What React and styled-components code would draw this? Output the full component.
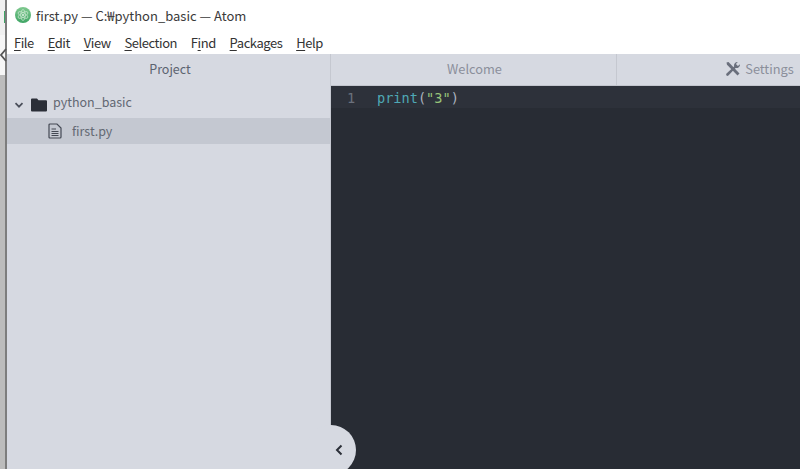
import React from "react";
import styled, { createGlobalStyle } from "styled-components";

const GlobalStyle = createGlobalStyle`
  html, body, #root {
    margin: 0;
    padding: 0;
    width: 800px;
    height: 469px;
    overflow: hidden;
    background: #fff;
  }
`;

const Page = styled.div`
  position: relative;
  display: flex;
  width: 800px;
  height: 469px;
  overflow: hidden;
  font-family: "Noto Sans CJK KR", "Noto Sans", sans-serif;
`;

const BehindStrip = styled.div`
  flex: 0 0 7px;
  box-sizing: border-box;
  display: flex;
  flex-direction: column;
  border-right: 2px solid #7d7d7d;
`;

const StripPart = styled.div`
  height: ${(p) => (p.$height ? `${p.$height}px` : "auto")};
  flex: ${(p) => (p.$height ? "none" : 1)};
  background: ${(p) => p.$color};
`;

const StripGreen = styled.div`
  position: absolute;
  left: 4px;
  top: 11px;
  width: 1px;
  height: 12px;
  background: #3fa565;
`;

const StripArrow = styled.svg`
  position: absolute;
  left: 0;
  top: 47px;
`;

const Window = styled.div`
  flex: 1;
  min-width: 0;
  display: flex;
  flex-direction: column;
`;

const TitleBar = styled.div`
  height: 32px;
  display: flex;
  align-items: center;
  gap: 5px;
  padding-left: 8px;
  padding-bottom: 2px;
  box-sizing: border-box;
  font-size: 13px;
  color: #3a3a3a;
  background: #fff;
`;

const MenuBar = styled.div`
  height: 22px;
  display: flex;
  align-items: center;
  padding-left: 7px;
  padding-bottom: 2px;
  box-sizing: border-box;
  gap: 13.8px;
  font-size: 13px;
  letter-spacing: -0.45px;
  color: #333;
  background: #fff;
`;

const MenuItem = styled.span`
  u {
    text-underline-offset: 2px;
  }
`;

const Workspace = styled.div`
  flex: 1;
  min-height: 0;
  display: flex;
`;

const Sidebar = styled.div`
  flex: 0 0 324px;
  background: #d6d9e1;
  border-right: 1px solid #c5c8d0;
  box-sizing: border-box;
  display: flex;
  flex-direction: column;
`;

const PanelTitle = styled.div`
  height: 32px;
  display: flex;
  align-items: center;
  justify-content: center;
  font-size: 12.5px;
  color: #5c6370;
  padding-left: 3px;
  padding-bottom: 4px;
  box-sizing: border-box;
`;

const TreeList = styled.div`
  padding-top: 5px;
  display: flex;
  flex-direction: column;
`;

const TreeRow = styled.div`
  height: ${(p) => (p.$selected ? 26 : 27)}px;
  display: flex;
  align-items: center;
  padding-left: ${(p) => p.$indent}px;
  gap: ${(p) => p.$gap}px;
  font-size: 12.5px;
  color: #636873;
  background: ${(p) => (p.$selected ? "#c4c8d1" : "transparent")};
`;

const TreeLabel = styled.span`
  position: relative;
  top: ${(p) => p.$shift}px;
`;

const Main = styled.div`
  flex: 1;
  min-width: 0;
  display: flex;
  flex-direction: column;
`;

const TabBar = styled.div`
  height: 32px;
  display: flex;
  overflow: hidden;
  background: #d6d9e1;
  border-bottom: 1px solid #c2c5cd;
  box-sizing: border-box;
`;

const Tab = styled.div`
  flex: 0 0 ${(p) => p.$width}px;
  display: flex;
  align-items: center;
  justify-content: center;
  gap: 4px;
  padding-left: 2px;
  padding-bottom: 2px;
  font-size: 12.8px;
  color: #8b8f9b;
  border-right: 1px solid #c5c8d0;
  box-sizing: border-box;
`;

const Editor = styled.div`
  flex: 1;
  background: #282c34;
  font-family: "DejaVu Sans Mono", monospace;
  font-size: 13.6px;
`;

const CodeLine = styled.div`
  height: 22px;
  display: flex;
  align-items: center;
  padding-top: 2px;
  box-sizing: border-box;
  background: #2d313a;
`;

const LineNumber = styled.span`
  flex: 0 0 46px;
  padding-left: 16px;
  box-sizing: border-box;
  color: #6b717d;
`;

const Code = styled.span`
  color: #abb2bf;
`;

const Fn = styled.span`
  color: #4fa9b5;
`;

const Str = styled.span`
  color: #98c379;
`;

const DockToggle = styled.div`
  position: absolute;
  left: 306px;
  top: 425px;
  width: 50px;
  height: 50px;
  border-radius: 50%;
  background: #d6d9e1;
  display: flex;
  align-items: center;
  justify-content: center;
  padding-left: 15px;
  box-sizing: border-box;
`;

function AtomLogo() {
  return (
    <svg width="16" height="16" viewBox="0 0 16 16">
      <defs>
        <linearGradient id="atomGrad" x1="0" y1="0" x2="0" y2="1">
          <stop offset="0" stopColor="#7fc98f" />
          <stop offset="1" stopColor="#3fa565" />
        </linearGradient>
      </defs>
      <circle cx="8" cy="8" r="8" fill="url(#atomGrad)" />
      <g fill="none" stroke="#cfe9d4" strokeWidth="0.7">
        <ellipse cx="8" cy="8" rx="5.5" ry="2.2" transform="rotate(30 8 8)" />
        <ellipse cx="8" cy="8" rx="5.5" ry="2.2" transform="rotate(90 8 8)" />
        <ellipse cx="8" cy="8" rx="5.5" ry="2.2" transform="rotate(150 8 8)" />
      </g>
      <circle cx="8" cy="8" r="1" fill="#e4f4e7" />
    </svg>
  );
}

function TreeChevron() {
  return (
    <svg width="10" height="10" viewBox="0 0 10 10">
      <path d="M1.5 3.2 L5 6.7 L8.5 3.2" fill="none" stroke="#4a4f5a" strokeWidth="1.7" />
    </svg>
  );
}

function FolderIcon() {
  return (
    <svg width="16" height="14" viewBox="0 0 16 14">
      <path d="M0 1.5 Q0 .5 1 .5 H6 L7.5 2.2 H15 Q16 2.2 16 3.2 V12.5 Q16 13.5 15 13.5 H1 Q0 13.5 0 12.5 Z" fill="#2b2f38" />
    </svg>
  );
}

function FileIcon() {
  return (
    <svg width="14" height="16" viewBox="0 0 14 16">
      <path d="M1 2 Q1 1 2 1 H9 L13 5 V14 Q13 15 12 15 H2 Q1 15 1 14 Z" fill="none" stroke="#444954" strokeWidth="1.2" />
      <path d="M3.5 6 H8 M3.5 8.5 H10.5 M3.5 10.5 H10.5 M3.5 12.5 H10.5" stroke="#444954" strokeWidth="1.1" />
    </svg>
  );
}

function ToolsIcon() {
  return (
    <svg width="16" height="16" viewBox="0 0 16 16">
      <path d="M1.5 1.5 L3.5 1 L14.5 12.5 L12.5 14.5 L2 3.8 Z" fill="#6a6f7c" />
      <path d="M15 3.2 A3.5 3.5 0 0 1 10.6 6.9 L3.4 14.6 Q2.4 15.4 1.5 14.5 Q.7 13.6 1.5 12.6 L9.1 5.4 A3.5 3.5 0 0 1 12.8 1 L10.9 3 L12.9 5 Z" fill="#6a6f7c" />
    </svg>
  );
}

const menus = [
  ["F", "ile"],
  ["E", "dit"],
  ["V", "iew"],
  ["S", "election"],
  ["Fi", "nd", 1],
  ["P", "ackages"],
  ["H", "elp"],
];

export default function App() {
  return (
    <>
      <GlobalStyle />
      <Page>
        <BehindStrip>
          <StripPart $height={35} $color="#f0f0f0" />
          <StripPart $height={40} $color="#f6f6f6" />
          <StripPart $color="#bcbcbc" />
        </BehindStrip>
        <StripGreen />
        <StripArrow width="7" height="16" viewBox="0 0 7 16">
          <path d="M6 2 L1 8 L6 14" fill="none" stroke="#555" strokeWidth="1.8" />
        </StripArrow>
        <Window>
          <TitleBar>
            <AtomLogo />
            <span>first.py — C:₩python_basic — Atom</span>
          </TitleBar>
          <MenuBar>
            {menus.map(([a, b, second]) => (
              <MenuItem key={a + b}>
                {second ? (
                  <>F<u>i</u>nd</>
                ) : (
                  <><u>{a}</u>{b}</>
                )}
              </MenuItem>
            ))}
          </MenuBar>
          <Workspace>
            <Sidebar>
              <PanelTitle>Project</PanelTitle>
              <TreeList>
                <TreeRow $indent={7} $gap={6.5}>
                  <TreeChevron />
                  <FolderIcon />
                  <TreeLabel $shift={-3}>python_basic</TreeLabel>
                </TreeRow>
                <TreeRow $indent={41} $gap={10} $selected>
                  <FileIcon />
                  <TreeLabel $shift={-1}>first.py</TreeLabel>
                </TreeRow>
              </TreeList>
            </Sidebar>
            <Main>
              <TabBar>
                <Tab $width={286}>Welcome</Tab>
                <Tab $width={284}>
                  <ToolsIcon />
                  <span>Settings</span>
                </Tab>
              </TabBar>
              <Editor>
                <CodeLine>
                  <LineNumber>1</LineNumber>
                  <Code>
                    <Fn>print</Fn>(<Str>"3"</Str>)
                  </Code>
                </CodeLine>
              </Editor>
            </Main>
          </Workspace>
        </Window>
        <DockToggle>
          <svg width="10" height="12" viewBox="0 0 10 12">
            <path d="M7.5 1.5 L3 6 L7.5 10.5" fill="none" stroke="#2b2f38" strokeWidth="2" />
          </svg>
        </DockToggle>
      </Page>
    </>
  );
}
